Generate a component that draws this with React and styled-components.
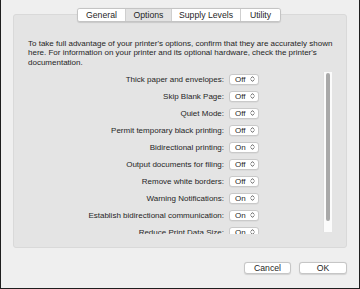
import React from 'react';
import styled, { createGlobalStyle } from 'styled-components';

const GlobalStyle = createGlobalStyle`
    html, body {
        margin: 0;
        padding: 0;
        background: #efefef;
    }
    * {
        box-sizing: border-box;
    }
`

const Window = styled.div`
    width: 360px;
    height: 289px;
    display: flex;
    flex-direction: column;
    background: #efefef;
    border-left: 1px solid #1e1e1e;
    border-right: 1px solid #1e1e1e;
    border-bottom: 1px solid #1e1e1e;
    padding: 14px 12px 0 12px;
    font-family: "Liberation Sans", Arial, sans-serif;
    color: #1f1f1f;
`

const Panel = styled.div`
    height: 234px;
    display: flex;
    flex-direction: column;
    background: #e4e4e4;
    border: 1px solid #d9d9d9;
    border-radius: 3px;
    padding: 0 14px 13px 14px;
`

const TabBar = styled.div`
    align-self: center;
    display: flex;
    height: 14px;
    margin-top: -7px;
    margin-left: -2px;
    background: #fff;
    border: 1px solid #c4c4c4;
    border-radius: 3px;
    box-shadow: 0 0.5px 1px rgba(0, 0, 0, 0.12);
    overflow: hidden;
`

const Tab = styled.div`
    display: flex;
    align-items: center;
    justify-content: center;
    width: ${p => p.w}px;
    font-size: 8.7px;
    background: ${p => (p.active ? '#e3e3e3' : '#fff')};
    border-left: ${p => (p.first ? 'none' : '1px solid #cfcfcf')};
`

const Intro = styled.p`
    margin: 17px 0 0 0;
    font-size: 8px;
    line-height: 9.3px;
    white-space: nowrap;
`

const ListArea = styled.div`
    display: flex;
    height: 163px;
    margin-top: 4px;
    overflow: hidden;
`

const Rows = styled.div`
    flex: 1;
    display: grid;
    grid-template-columns: 1fr 30px;
    grid-auto-rows: 17px;
    column-gap: 5px;
    align-items: center;
    padding-right: 64px;
`

const Label = styled.span`
    font-size: 8px;
    text-align: right;
    white-space: nowrap;
`

const Popup = styled.div`
    display: flex;
    align-items: center;
    justify-content: space-between;
    height: 11px;
    padding: 0 3px 0 5px;
    background: #fff;
    border: 1px solid #c9c9c9;
    border-radius: 3px;
    font-size: 8px;
    box-shadow: 0 0.5px 0.5px rgba(0, 0, 0, 0.08);
`

const Track = styled.div`
    width: 9px;
    height: 160px;
    margin-top: 1px;
    display: flex;
    justify-content: center;
    padding-top: 1px;
    background: #fbfbfb;
    border-left: 1px solid #e0e0e0;
`

const Thumb = styled.div`
    width: 4px;
    height: 148px;
    background: #a9a9a9;
    border-radius: 2px;
`

const Footer = styled.div`
    display: flex;
    justify-content: flex-end;
    gap: 8px;
    margin-top: 14px;
`

const Button = styled.button`
    width: ${p => p.w}px;
    height: 12px;
    padding: 0;
    background: #fff;
    border: 1px solid #c6c6c6;
    border-radius: 3px;
    font-family: inherit;
    font-size: 8.7px;
    line-height: 10px;
    color: #1f1f1f;
    box-shadow: 0 0.5px 1px rgba(0, 0, 0, 0.12);
`

const Chevrons = () => (
    <svg width="5" height="8" viewBox="0 0 5 8">
        <path
            d="M1 3.2 L2.5 1.6 L4 3.2 M1 4.8 L2.5 6.4 L4 4.8"
            fill="none"
            stroke="#555"
            strokeWidth="0.9"
            strokeLinecap="round"
            strokeLinejoin="round"
        />
    </svg>
)

const tabs = [
    { name: 'General', w: 47 },
    { name: 'Options', w: 46, active: true },
    { name: 'Supply Levels', w: 69 },
    { name: 'Utility', w: 40 },
]

const options = [
    ['Thick paper and envelopes:', 'Off'],
    ['Skip Blank Page:', 'Off'],
    ['Quiet Mode:', 'Off'],
    ['Permit temporary black printing:', 'Off'],
    ['Bidirectional printing:', 'On'],
    ['Output documents for filing:', 'Off'],
    ['Remove white borders:', 'Off'],
    ['Warning Notifications:', 'On'],
    ['Establish bidirectional communication:', 'On'],
    ['Reduce Print Data Size:', 'On'],
]

export default function App() {
    return (
        <>
            <GlobalStyle />
            <Window>
                <Panel>
                    <TabBar>
                        {tabs.map((t, i) => (
                            <Tab key={t.name} w={t.w} active={t.active} first={i === 0}>
                                {t.name}
                            </Tab>
                        ))}
                    </TabBar>
                    <Intro>
                        To take full advantage of your printer's options, confirm that they are accurately shown
                        <br />
                        here. For information on your printer and its optional hardware, check the printer's
                        <br />
                        documentation.
                    </Intro>
                    <ListArea>
                        <Rows>
                            {options.map(([label, value]) => (
                                <React.Fragment key={label}>
                                    <Label>{label}</Label>
                                    <Popup>
                                        {value}
                                        <Chevrons />
                                    </Popup>
                                </React.Fragment>
                            ))}
                        </Rows>
                        <Track>
                            <Thumb />
                        </Track>
                    </ListArea>
                </Panel>
                <Footer>
                    <Button w={47}>Cancel</Button>
                    <Button w={48}>OK</Button>
                </Footer>
            </Window>
        </>
    )
}
